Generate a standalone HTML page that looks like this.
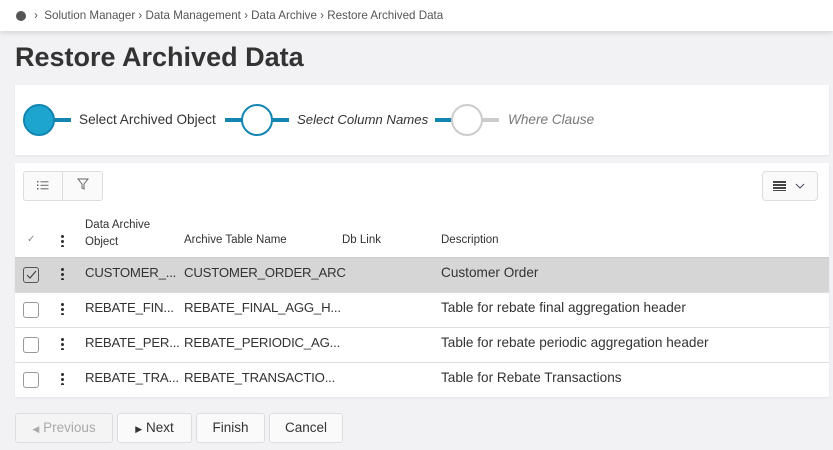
<!DOCTYPE html><html><head><style>
*{box-sizing:border-box;margin:0;padding:0}
body{width:833px;height:450px;background:#f2f1f4;font-family:"Liberation Sans",sans-serif;color:#333;position:relative;overflow:hidden;font-size:13px}
.a{position:absolute}
.hdr{left:0;top:0;width:833px;height:31px;background:#fff;box-shadow:0 2px 5px rgba(0,0,0,.12)}
.card{background:#fff;left:15px;width:814px;box-shadow:0 1px 2px rgba(0,0,0,.06)}
.row{left:15px;width:814px;height:35px;border-top:1px solid #ddd}
.cb{width:16px;height:16px;border:1px solid #999;border-radius:3px;background:#fff}
.dots{width:3px;height:13px;background:radial-gradient(circle,#333 1.4px,transparent 1.6px) 0 0/3px 5px repeat-y}
.btn{top:413px;height:30px;border:1px solid #ddd;border-radius:3px;background:#fafafa;font-size:14px;text-align:center;line-height:28px}
.t{font-size:13.6px;white-space:nowrap}
.tr{font-size:13.2px;white-space:nowrap;letter-spacing:-.2px}
</style></head><body>
<div class="a hdr"></div>
<div class="a" style="left:16px;top:11px;width:10px;height:10px;border-radius:50%;background:#555"></div>
<div class="a" style="left:34px;top:9px;font-size:11.6px;color:#555">›&nbsp;&nbsp;Solution Manager › Data Management › Data Archive › Restore Archived Data</div>
<div class="a" style="left:15px;top:42px;font-size:27px;font-weight:bold;color:#333">Restore Archived Data</div>
<div class="a card" style="top:85px;height:70px"></div>
<div class="a" style="left:23px;top:104px;width:32px;height:32px;border-radius:50%;background:#1da4cf;border:2px solid #1285b3"></div>
<div class="a" style="left:54px;top:118px;width:17px;height:4px;background:#1285b3"></div>
<div class="a t" style="left:79px;top:112px">Select Archived Object</div>
<div class="a" style="left:225px;top:118px;width:18px;height:4px;background:#1285b3"></div>
<div class="a" style="left:241px;top:104px;width:32px;height:32px;border-radius:50%;background:#fff;border:2px solid #1285b3"></div>
<div class="a" style="left:272px;top:118px;width:17px;height:4px;background:#1285b3"></div>
<div class="a t" style="left:297px;top:112px;font-style:italic;font-size:13.2px">Select Column Names</div>
<div class="a" style="left:435px;top:118px;width:18px;height:4px;background:#1285b3"></div>
<div class="a" style="left:451px;top:104px;width:32px;height:32px;border-radius:50%;background:#fff;border:2px solid #ccc"></div>
<div class="a" style="left:482px;top:118px;width:17px;height:4px;background:#ccc"></div>
<div class="a t" style="left:508px;top:112px;font-style:italic;color:#777">Where Clause</div>
<div class="a card" style="top:163px;height:234px"></div>
<div class="a" style="left:23px;top:171px;width:80px;height:30px;border:1px solid #ddd;border-radius:3px;background:#fafafa"></div>
<div class="a" style="left:62px;top:172px;width:1px;height:28px;background:#ddd"></div>
<svg class="a" style="left:37px;top:180px" width="12" height="10"><g fill="#666"><rect x="0" y="1" width="1.5" height="1.5"/><rect x="0" y="4.5" width="1.5" height="1.5"/><rect x="0" y="8" width="1.5" height="1.5"/><rect x="3.5" y="1.3" width="8" height="1"/><rect x="3.5" y="4.8" width="8" height="1"/><rect x="3.5" y="8.3" width="8" height="1"/></g></svg>
<svg class="a" style="left:77px;top:178px" width="12" height="12"><path d="M1 1H11L7 6V11L5 10V6Z" fill="none" stroke="#666"/></svg>
<div class="a" style="left:762px;top:171px;width:56px;height:30px;border:1px solid #ddd;border-radius:4px;background:#fafafa"></div>
<div class="a" style="left:773px;top:181px;width:13px;height:10px;background:repeating-linear-gradient(#444 0 2px,#fff 2px 3px)"></div>
<svg class="a" style="left:795px;top:183px" width="10" height="6"><path d="M1 1L5 5L9 1" fill="none" stroke="#446" /></svg>
<div class="a" style="left:27px;top:234px;font-size:10px;color:#888">✓</div>
<div class="a dots" style="left:61px;top:234px"></div>
<div class="a" style="left:85px;top:217px;font-size:11.5px;line-height:17px">Data Archive<br>Object</div>
<div class="a" style="left:184px;top:234px;font-size:11.5px">Archive Table Name</div>
<div class="a" style="left:342px;top:234px;font-size:11.5px">Db Link</div>
<div class="a" style="left:441px;top:234px;font-size:11.5px">Description</div>
<div class="a row" style="top:257px;background:#d6d6d6;border-top:1px solid #ccc"></div>
<div class="a row" style="top:292px"></div>
<div class="a row" style="top:327px"></div>
<div class="a row" style="top:362px"></div>
<div class="a cb" style="left:23px;top:267px;border-color:#555;background:transparent"></div>
<svg class="a" style="left:26px;top:270px" width="11" height="10"><path d="M1 5L4 8L10 1" fill="none" stroke="#444" stroke-width="1.2"/></svg>
<div class="a cb" style="left:23px;top:302px"></div>
<div class="a cb" style="left:23px;top:337px"></div>
<div class="a cb" style="left:23px;top:372px"></div>
<div class="a dots" style="left:61px;top:267px"></div><div class="a dots" style="left:61px;top:302px"></div><div class="a dots" style="left:61px;top:337px"></div><div class="a dots" style="left:61px;top:372px"></div>
<div class="a tr" style="left:85px;top:265px">CUSTOMER_...</div>
<div class="a tr" style="left:184px;top:265px">CUSTOMER_ORDER_ARC</div>
<div class="a t" style="left:441px;top:265px">Customer Order</div>
<div class="a tr" style="left:85px;top:300px">REBATE_FIN...</div>
<div class="a tr" style="left:184px;top:300px">REBATE_FINAL_AGG_H...</div>
<div class="a t" style="left:441px;top:300px">Table for rebate final aggregation header</div>
<div class="a tr" style="left:85px;top:335px">REBATE_PER...</div>
<div class="a tr" style="left:184px;top:335px">REBATE_PERIODIC_AG...</div>
<div class="a t" style="left:441px;top:335px">Table for rebate periodic aggregation header</div>
<div class="a tr" style="left:85px;top:370px">REBATE_TRA...</div>
<div class="a tr" style="left:184px;top:370px">REBATE_TRANSACTIO...</div>
<div class="a t" style="left:441px;top:370px">Table for Rebate Transactions</div>
<div class="a btn" style="left:15px;width:98px;color:#aaa;background:#f4f4f4;font-size:13.5px"><span style="font-size:9px">◀</span> Previous</div>
<div class="a btn" style="left:117px;width:75px;font-size:13.5px"><span style="font-size:9px">▶</span> Next</div>
<div class="a btn" style="left:196px;width:69px;font-size:13.5px">Finish</div>
<div class="a btn" style="left:269px;width:74px;font-size:13.5px">Cancel</div>
</body></html>
